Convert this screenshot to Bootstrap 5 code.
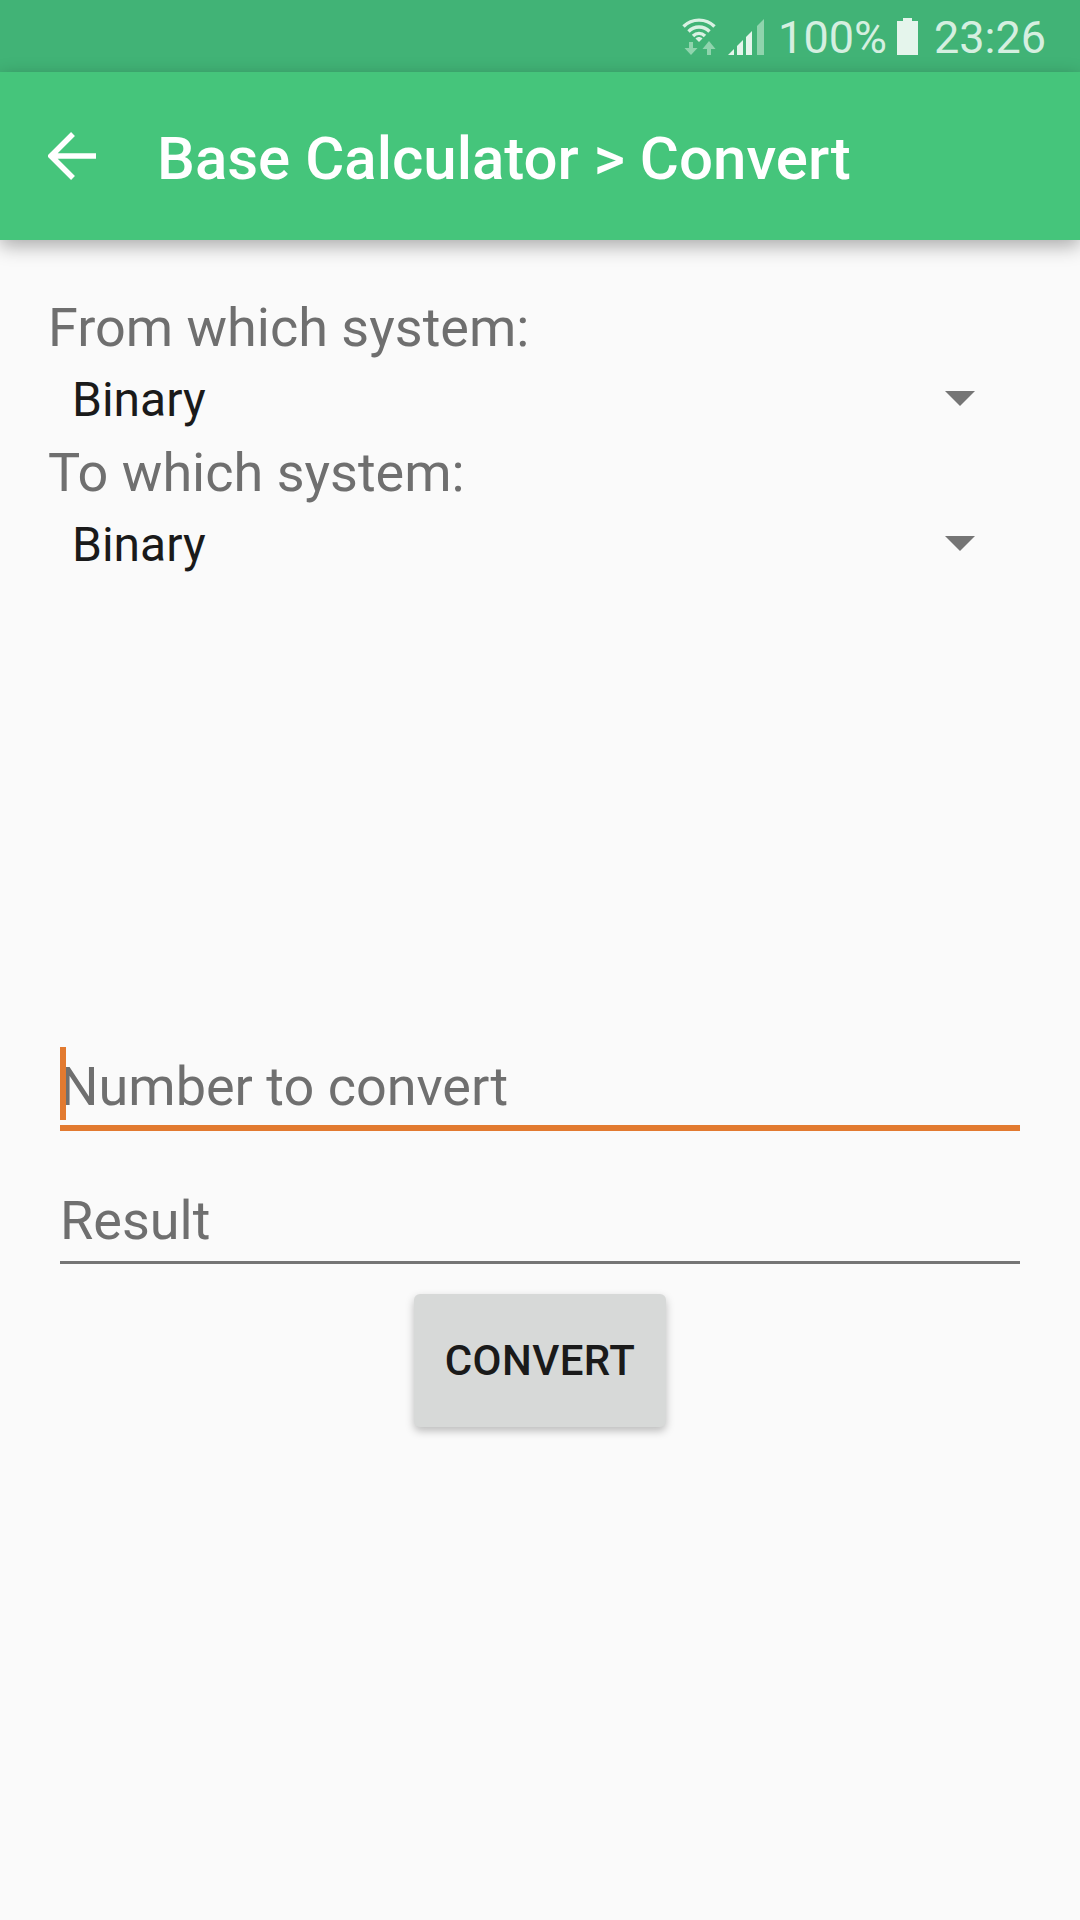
<!DOCTYPE html>
<html lang="en">
<head>
<meta charset="utf-8">
<title>Base Calculator</title>
<link href="https://cdn.jsdelivr.net/npm/bootstrap@5.3.0/dist/css/bootstrap.min.css" rel="stylesheet">
<style>
html,body{height:100%;}
body{background:#fafafa;font-family:Roboto,"Liberation Sans",sans-serif;overflow:hidden;}
.stat-bar{height:72px;background:#41b376;color:#d5efe0;font-size:45px;line-height:72px;padding-right:34px;}
.stat-bar span{position:relative;top:2px;}
.stat-time{margin-left:16px;}
.stat-wifi{margin-right:12px;}
.stat-sig{margin-right:14px;}
.stat-batt{margin-left:10px;}
.app-head{height:168px;background:#45c57b;box-shadow:0 6px 18px rgba(0,0,0,.32);position:relative;padding-left:48px;}
.app-title{font-size:60px;font-weight:500;color:#fff;margin:0 0 0 61px;line-height:168px;padding-top:5px;}
.form-area{padding:0 60px 0 48px;}
.sys-label{font-size:54px;line-height:72px;color:#6f6f6f;height:72px;}
.sys-spin{height:73px;padding:0 45px 0 24px;font-size:48px;line-height:73px;color:#1a1a1a;}
.sys-spin span{position:relative;top:-1px;}
.spin-tri{width:30px;height:15px;margin-top:-4px;}
.sys-first{margin-top:52px;}
.num-field{margin-top:453px;margin-left:12px;height:96px;position:relative;border-bottom:6px solid #e27a30;font-size:54px;line-height:72px;padding-top:16px;color:#6f6f6f;}
.caret-bar{position:absolute;left:0;top:12px;width:6px;height:73px;background:#e27a30;}
.res-field{margin-left:12px;height:133px;border-bottom:3px solid #757575;font-size:54px;line-height:72px;padding-top:54px;color:#6f6f6f;}
.btn-row{margin-left:12px;}
.conv-btn{width:252px;height:133px;margin-top:30px;background:#d7d9d8;color:#1a1a1a;font-size:42px;font-weight:500;letter-spacing:.4px;border:0;border-radius:6px;box-shadow:0 4px 8px rgba(0,0,0,.25);padding:0;line-height:1;}
.conv-btn:hover,.conv-btn:active{background:#d7d9d8;color:#1a1a1a;}
</style>
</head>
<body>
<div class="stat-bar d-flex justify-content-end align-items-center">
  <svg class="stat-wifi" width="34" height="38" viewBox="0 0 34 38">
    <g fill="none" stroke="#d9f1e3" stroke-width="3.4">
      <path d="M1.500 9.500C10 1 24 1 32.500 9.500"/>
      <path d="M6.500 14.500C12.500 8.500 21.500 8.500 27.500 14.500"/>
      <path d="M11 19C14.500 15.500 19.500 15.500 23 19"/>
    </g>
    <path d="M13.500 21.500C15.500 19.500 18.500 19.500 20.500 21.500L17 25Z" fill="#d9f1e3"/>
    <path d="M7 27V33H2.500L9 40L15.500 33H11V27Z" transform="translate(0,-2)" fill="#8fd4ad"/>
    <path d="M25 38V32H20.500L27 24L33.500 32H29V38Z" fill="#8fd4ad"/>
  </svg>
  <svg class="stat-sig" width="36" height="37" viewBox="0 0 36 37">
    <polygon points="0,37 6,31 6,37" fill="#e5f5ec"/>
    <polygon points="9,37 9,28 15,22 15,37" fill="#e5f5ec"/>
    <polygon points="18,37 18,19 24,13 24,37" fill="#e5f5ec"/>
    <polygon points="29,37 29,8 36,1 36,37" fill="#8fd4ad"/>
  </svg>
  <span>100%</span>
  <svg class="stat-batt" width="21" height="37" viewBox="0 0 21 37">
    <path d="M6 0H15V3H21V37H0V3H6Z" fill="#e5f5ec"/>
  </svg>
  <span class="stat-time">23:26</span>
</div>
<header class="app-head d-flex align-items-center">
  <svg width="48" height="48" viewBox="0 0 48 48" class="flex-shrink-0">
    <path d="M48 24H3M25 2L3 24L25 46" fill="none" stroke="#fff" stroke-width="5.500"/>
  </svg>
  <h1 class="app-title">Base Calculator &gt; Convert</h1>
</header>
<main class="form-area">
  <div class="sys-label sys-first">From which system:</div>
  <div class="sys-spin d-flex justify-content-between align-items-center">
    <span>Binary</span>
    <svg class="spin-tri" viewBox="0 0 30 15"><polygon points="0,0 30,0 15,15" fill="#757575"/></svg>
  </div>
  <div class="sys-label">To which system:</div>
  <div class="sys-spin d-flex justify-content-between align-items-center">
    <span>Binary</span>
    <svg class="spin-tri" viewBox="0 0 30 15"><polygon points="0,0 30,0 15,15" fill="#757575"/></svg>
  </div>
  <div class="num-field"><div class="caret-bar"></div>Number to convert</div>
  <div class="res-field">Result</div>
  <div class="btn-row d-flex justify-content-center">
    <button type="button" class="btn conv-btn">CONVERT</button>
  </div>
</main>
<script src="https://cdn.jsdelivr.net/npm/bootstrap@5.3.0/dist/js/bootstrap.bundle.min.js"></script>
</body>
</html>
